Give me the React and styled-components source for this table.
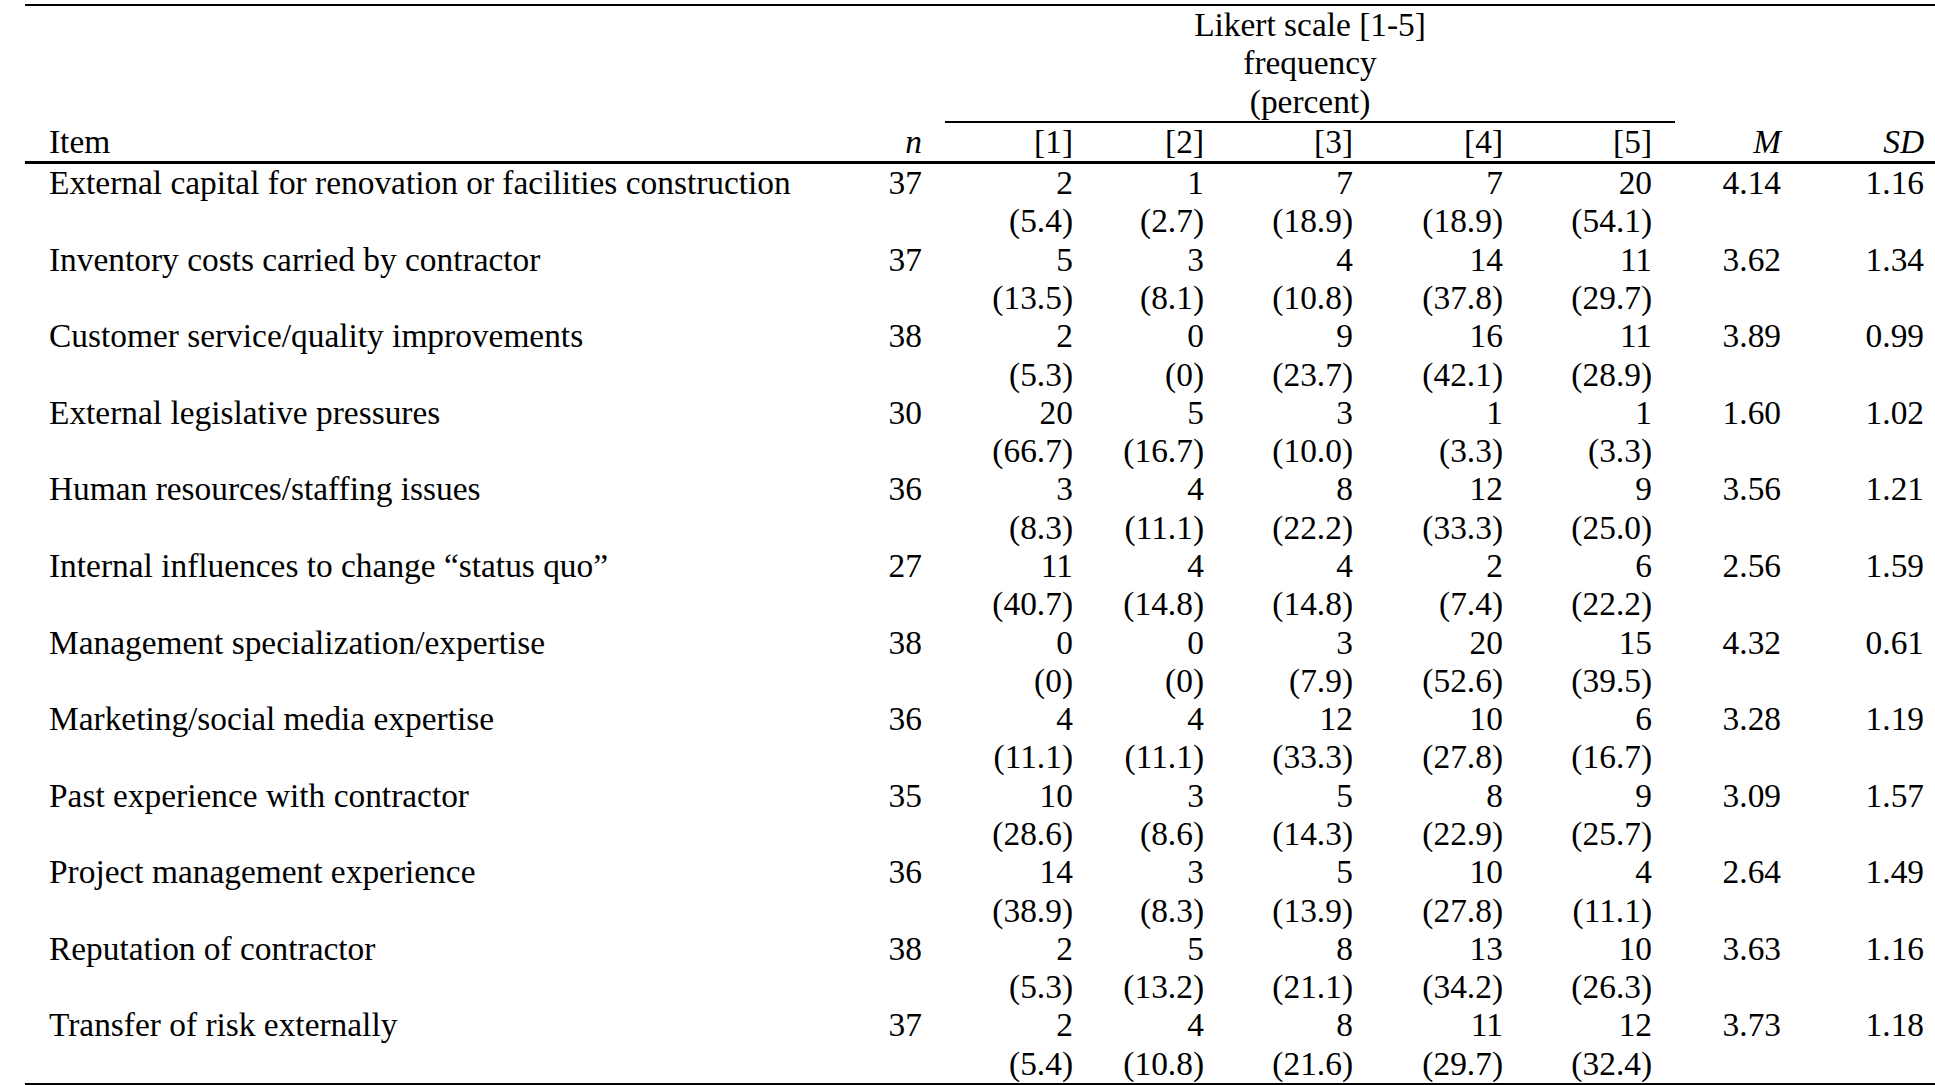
import styled, { createGlobalStyle } from 'styled-components'

const GlobalStyle = createGlobalStyle`
  html, body {
    margin: 0;
    padding: 0;
    background: #fff;
  }
  body {
    font-family: 'Liberation Serif', 'Times New Roman', serif;
    color: #000;
  }
`

const rows = [
  ['External capital for renovation or facilities construction', 37, [2, 1, 7, 7, 20], ['5.4', '2.7', '18.9', '18.9', '54.1'], '4.14', '1.16'],
  ['Inventory costs carried by contractor', 37, [5, 3, 4, 14, 11], ['13.5', '8.1', '10.8', '37.8', '29.7'], '3.62', '1.34'],
  ['Customer service/quality improvements', 38, [2, 0, 9, 16, 11], ['5.3', '0', '23.7', '42.1', '28.9'], '3.89', '0.99'],
  ['External legislative pressures', 30, [20, 5, 3, 1, 1], ['66.7', '16.7', '10.0', '3.3', '3.3'], '1.60', '1.02'],
  ['Human resources/staffing issues', 36, [3, 4, 8, 12, 9], ['8.3', '11.1', '22.2', '33.3', '25.0'], '3.56', '1.21'],
  ['Internal influences to change \u201cstatus quo\u201d', 27, [11, 4, 4, 2, 6], ['40.7', '14.8', '14.8', '7.4', '22.2'], '2.56', '1.59'],
  ['Management specialization/expertise', 38, [0, 0, 3, 20, 15], ['0', '0', '7.9', '52.6', '39.5'], '4.32', '0.61'],
  ['Marketing/social media expertise', 36, [4, 4, 12, 10, 6], ['11.1', '11.1', '33.3', '27.8', '16.7'], '3.28', '1.19'],
  ['Past experience with contractor', 35, [10, 3, 5, 8, 9], ['28.6', '8.6', '14.3', '22.9', '25.7'], '3.09', '1.57'],
  ['Project management experience', 36, [14, 3, 5, 10, 4], ['38.9', '8.3', '13.9', '27.8', '11.1'], '2.64', '1.49'],
  ['Reputation of contractor', 38, [2, 5, 8, 13, 10], ['5.3', '13.2', '21.1', '34.2', '26.3'], '3.63', '1.16'],
  ['Transfer of risk externally', 37, [2, 4, 8, 11, 12], ['5.4', '10.8', '21.6', '29.7', '32.4'], '3.73', '1.18'],
]

const colWidths = [840, 80, 151, 131, 149, 150, 149, 129, 131]

const Page = styled.div`
  padding: 4px 0 0 25px;
`

const Table = styled.table`
  width: 1910px;
  table-layout: fixed;
  border-collapse: separate;
  border-spacing: 0;
  border-top: 2px solid #000;
  border-bottom: 2px solid #000;
  font-size: 33.4px;
  line-height: 38.29px;
`

const Th = styled.th`
  font-weight: normal;
  font-style: ${(p) => (p.$italic ? 'italic' : 'normal')};
  text-align: ${(p) => (p.$left ? 'left' : 'right')};
  vertical-align: bottom;
  padding: 0 ${(p) => p.$pr ?? 23}px 0 ${(p) => (p.$left ? 24 : 0)}px;
  border-bottom: 3px solid #000;
  white-space: nowrap;
`

const SpanHead = styled.th`
  font-weight: normal;
  text-align: center;
  padding: 0;
  border-bottom: 2px solid #000;
`

const Td = styled.td`
  text-align: ${(p) => (p.$left ? 'left' : 'right')};
  vertical-align: top;
  padding: 0 ${(p) => p.$pr ?? 23}px 0 ${(p) => (p.$left ? 24 : 0)}px;
  white-space: nowrap;
`

const Line = styled.div`
  height: 38.29px;
`

const App = () => {
  return (
    <Page>
      <GlobalStyle />
      <Table>
        <colgroup>
          {colWidths.map((w, i) => (
            <col key={i} style={{ width: w }} />
          ))}
        </colgroup>
        <thead>
          <tr>
            <Th rowSpan={2} $left>Item</Th>
            <Th rowSpan={2} $italic>n</Th>
            <SpanHead colSpan={5}>
              Likert scale [1-5]
              <br />
              frequency
              <br />
              (percent)
            </SpanHead>
            <Th rowSpan={2} $italic>M</Th>
            <Th rowSpan={2} $italic $pr={11}>SD</Th>
          </tr>
          <tr>
            {[1, 2, 3, 4, 5].map((k) => (
              <Th key={k}>[{k}]</Th>
            ))}
          </tr>
        </thead>
        <tbody>
          {rows.map(([label, n, counts, pcts, m, sd]) => (
            <tr key={label}>
              <Td $left>
                <Line>{label}</Line>
                <Line />
              </Td>
              <Td>{n}</Td>
              {counts.map((c, i) => (
                <Td key={i}>
                  <Line>{c}</Line>
                  <Line>({pcts[i]})</Line>
                </Td>
              ))}
              <Td>{m}</Td>
              <Td $pr={11}>{sd}</Td>
            </tr>
          ))}
        </tbody>
      </Table>
    </Page>
  )
}

export default App
